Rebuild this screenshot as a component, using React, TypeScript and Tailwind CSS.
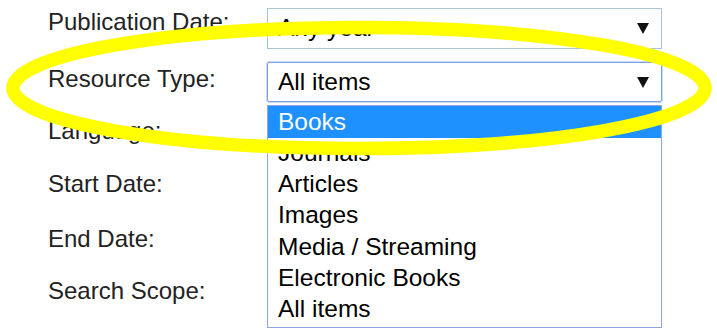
import React from "react";

const Arrow = () => (
  <svg width="12" height="11" viewBox="0 0 12 11" className="shrink-0">
    <polygon points="0,0 12,0 6,11" fill="#111" />
  </svg>
);

const options = [
  "Books",
  "Journals",
  "Articles",
  "Images",
  "Media / Streaming",
  "Electronic Books",
  "All items",
];

export default function App() {
  return (
    <div
      className="relative w-[717px] h-[334px] bg-white overflow-hidden"
      style={{ fontFamily: '"Liberation Sans", Arial, sans-serif' }}
    >
      <div className="flex pl-[48px] pt-[8px]">
        <div className="w-[219px] flex flex-col text-[24px] leading-[28px] text-[#222]">
          <div>Publication Date:</div>
          <div className="mt-[29px]">Resource Type:</div>
          <div className="mt-[24px]">Language:</div>
          <div className="mt-[25px]">Start Date:</div>
          <div className="mt-[27px]">End Date:</div>
          <div className="mt-[24px]">Search Scope:</div>
        </div>
        <div className="w-[395px] flex flex-col text-[24.5px] text-black">
          <div className="h-[41px] border border-[#a6c4d8] flex items-center justify-between pl-[10px] pr-[12px]">
            <span>Any year</span>
            <Arrow />
          </div>
          <div className="relative mt-[13px]">
            <div className="h-[40px] border border-[#78a3e6] shadow-[0_0_0_1px_#c9dcf7] rounded-[2px] flex items-center justify-between pl-[10px] pr-[12px]">
              <span>All items</span>
              <Arrow />
            </div>
            <div className="absolute left-0 right-0 top-[43px] border border-[#8ca8dc] bg-white">
              {options.map((o, i) => (
                <div
                  key={o}
                  className={
                    i === 0
                      ? "h-[32px] leading-[31px] pl-[10px] bg-[#1e90ff] text-white"
                      : "h-[31.2px] leading-[30px] pl-[10px] text-black"
                  }
                >
                  {o}
                </div>
              ))}
              <div className="h-[2px]" />
            </div>
          </div>
        </div>
      </div>
      <svg
        className="absolute inset-0 pointer-events-none"
        width="717"
        height="334"
        viewBox="0 0 717 334"
      >
        <ellipse
          cx="359"
          cy="88"
          rx="346"
          ry="60.5"
          fill="none"
          stroke="#ffff00"
          strokeWidth="13.5"
        />
      </svg>
    </div>
  );
}
